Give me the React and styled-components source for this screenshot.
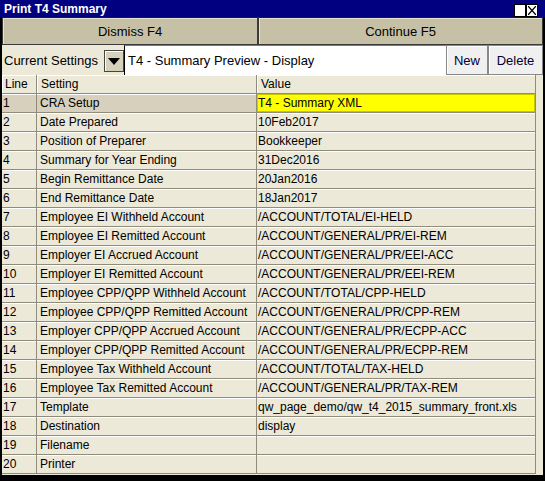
import React from "react";
import styled, { createGlobalStyle } from "styled-components";

const Global = createGlobalStyle`
  html, body { margin: 0; padding: 0; background: #000; }
  body { font-family: "Liberation Sans", Arial, sans-serif; font-size: 12px; color: #000; }
`;

const Window = styled.div`
  width: 545px;
  height: 481px;
  box-sizing: border-box;
  background: #000;
  padding: 0 2px 6px 2px;
  display: flex;
  flex-direction: column;
`;

const TitleBar = styled.div`
  height: 17px;
  background: #000080;
  color: #fff;
  font-weight: bold;
  font-size: 12px;
  display: flex;
  align-items: center;
  padding-left: 2px;
  margin: 0 -2px;
`;

const TitleText = styled.span`
  flex: 1;
  padding-left: 2px;
`;

const TitleBtn = styled.div`
  width: 10px;
  height: 11px;
  background: #fff;
  border: 1px solid #000;
  margin-top: 3px;
  display: flex;
  align-items: center;
  justify-content: center;
  &:last-child { margin-right: 7px; }
`;

const Body = styled.div`
  flex: 1;
  background: #ece9d8;
  display: flex;
  flex-direction: column;
`;

const ActionBar = styled.div`
  display: flex;
  height: 28px;
  background: #c6c1a6;
`;

const ActionButton = styled.div`
  flex: ${(p) => p.grow};
  display: flex;
  align-items: center;
  justify-content: center;
  font-size: 13px;
  border: 1px solid #3a3a3a;
  border-top-color: #1a1a1a;
  box-shadow: inset 1px 1px #e6e2cc;
  background: #c6c1a6;
`;

const SettingsRow = styled.div`
  display: flex;
  height: 30px;
  align-items: stretch;
`;

const Label = styled.div`
  width: 100px;
  display: flex;
  align-items: center;
  padding-left: 2px;
  font-size: 13px;
  background: #ece9d8;
`;

const DropButton = styled.div`
  width: 18px;
  margin: 5px 0 3px 0;
  background: #d6d1bb;
  border: 1px solid #444;
  box-shadow: inset 1px 1px #fff;
  display: flex;
  align-items: center;
  justify-content: center;
`;

const Input = styled.div`
  flex: 1;
  background: #fff;
  border-left: 1px solid #000;
  border-top: 1px solid #7a7a7a;
  display: flex;
  align-items: center;
  padding-left: 3px;
  font-size: 13px;
`;

const SmallButton = styled.div`
  width: ${(p) => p.w}px;
  background: #f0f0f0;
  border: 1px solid #888;
  box-shadow: inset 1px 1px #fff;
  display: flex;
  align-items: center;
  justify-content: center;
  font-size: 13px;
  color: #000033;
`;

const TableWrap = styled.div`
  display: flex;
  padding-right: 7px;
`;

const Grid = styled.div`
  display: grid;
  grid-template-columns: 35px 220px 279px;
  grid-auto-rows: 19px;
`;

const HeadCell = styled.div`
  background: #ece9d8;
  border-right: 1px solid #8f8c7e;
  border-bottom: 1px solid #8f8c7e;
  box-shadow: inset 1px 1px #fff;
  padding-left: ${(p) => p.pad}px;
  display: flex;
  align-items: center;
  font-size: 12px;
  box-sizing: border-box;
`;

const Cell = styled.div`
  background: ${(p) => (p.hi ? "#ffff00" : p.sel ? "#d6d0bc" : "#ece9d8")};
  border-right: 1px solid #8f8c7e;
  border-bottom: 1px solid #8f8c7e;
  box-shadow: ${(p) => (p.hi ? "inset 0 0 0 1px #c8c800" : "inset 0 1px #fff")};
  padding-left: ${(p) => p.pad}px;
  display: flex;
  align-items: center;
  font-size: 12px;
  white-space: nowrap;
  overflow: hidden;
  box-sizing: border-box;
`;

const rows = [
  ["CRA Setup", "T4 - Summary XML"],
  ["Date Prepared", "10Feb2017"],
  ["Position of Preparer", "Bookkeeper"],
  ["Summary for Year Ending", "31Dec2016"],
  ["Begin Remittance Date", "20Jan2016"],
  ["End Remittance Date", "18Jan2017"],
  ["Employee EI Withheld Account", "/ACCOUNT/TOTAL/EI-HELD"],
  ["Employee EI Remitted Account", "/ACCOUNT/GENERAL/PR/EI-REM"],
  ["Employer EI Accrued Account", "/ACCOUNT/GENERAL/PR/EEI-ACC"],
  ["Employer EI Remitted Account", "/ACCOUNT/GENERAL/PR/EEI-REM"],
  ["Employee CPP/QPP Withheld Account", "/ACCOUNT/TOTAL/CPP-HELD"],
  ["Employee CPP/QPP Remitted Account", "/ACCOUNT/GENERAL/PR/CPP-REM"],
  ["Employer CPP/QPP Accrued Account", "/ACCOUNT/GENERAL/PR/ECPP-ACC"],
  ["Employer CPP/QPP Remitted Account", "/ACCOUNT/GENERAL/PR/ECPP-REM"],
  ["Employee Tax Withheld Account", "/ACCOUNT/TOTAL/TAX-HELD"],
  ["Employee Tax Remitted Account", "/ACCOUNT/GENERAL/PR/TAX-REM"],
  ["Template", "qw_page_demo/qw_t4_2015_summary_front.xls"],
  ["Destination", "display"],
  ["Filename", ""],
  ["Printer", ""],
];

export default function App() {
  return (
    <>
      <Global />
      <Window>
        <TitleBar>
          <TitleText>Print T4 Summary</TitleText>
          <TitleBtn />
          <TitleBtn>
            <svg width="8" height="9" viewBox="0 0 8 9">
              <path d="M0 0 L8 9 M8 0 L0 9" stroke="#000" strokeWidth="1.3" />
            </svg>
          </TitleBtn>
        </TitleBar>
        <Body>
          <ActionBar>
            <ActionButton grow={256}>Dismiss F4</ActionButton>
            <ActionButton grow={285}>Continue F5</ActionButton>
          </ActionBar>
          <SettingsRow>
            <Label>Current Settings</Label>
            <DropButton>
              <svg width="12" height="7" viewBox="0 0 12 7">
                <path d="M0 0 H12 L6 7 Z" fill="#000" />
              </svg>
            </DropButton>
            <Input>T4 - Summary Preview - Display</Input>
            <SmallButton w={40}>New</SmallButton>
            <SmallButton w={53}>Delete</SmallButton>
          </SettingsRow>
          <TableWrap>
            <Grid>
              <HeadCell pad={3}>Line</HeadCell>
              <HeadCell pad={4}>Setting</HeadCell>
              <HeadCell pad={4}>Value</HeadCell>
              {rows.map(([s, v], i) => (
                <React.Fragment key={i}>
                  <Cell pad={1} sel={i === 0}>{i + 1}</Cell>
                  <Cell pad={3} sel={i === 0}>{s}</Cell>
                  <Cell pad={1} hi={i === 0}>{v}</Cell>
                </React.Fragment>
              ))}
            </Grid>
          </TableWrap>
        </Body>
      </Window>
    </>
  );
}
